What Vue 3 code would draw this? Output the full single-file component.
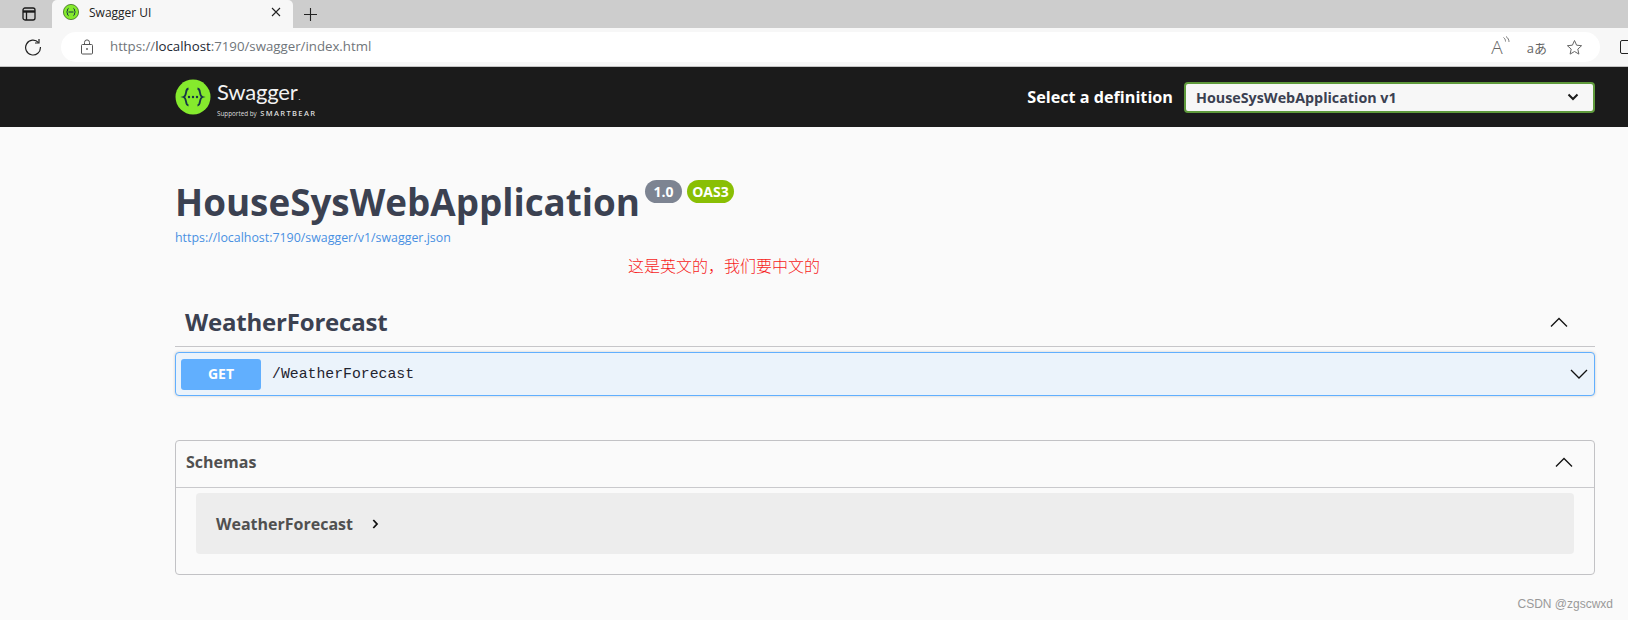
<script setup>
const path = '/WeatherForecast'
</script>

<template>
  <div class="page">
    <div class="tabstrip">
      <div class="winbtn">
        <svg width="16" height="16" viewBox="0 0 16 16" fill="none" stroke="#1a1a1a" stroke-width="1.3"><rect x="2" y="2" width="12" height="12" rx="2"/><path d="M2 5.500h12" stroke-width="2.400"/><path d="M5.500 6v8"/></svg>
      </div>
      <div class="tab">
        <svg class="fav" width="16" height="16" viewBox="0 0 16 16"><circle cx="8" cy="8" r="7.600" fill="#85ea2d" stroke="#2d5a10" stroke-width=".7"/><path d="M5.600 4.300C4 4.500 5 7.400 3.600 8 5 8.600 4 11.500 5.600 11.700M10.400 4.300C12 4.500 11 7.400 12.400 8 11 8.600 12 11.500 10.400 11.700M5.500 8h5" fill="none" stroke="#173647" stroke-width="1"/></svg>
        <span class="tabtitle">Swagger UI</span>
        <svg class="close" width="10" height="10" viewBox="0 0 10 10" stroke="#222" stroke-width="1.100"><path d="M1 1l8 8M9 1l-8 8"/></svg>
      </div>
      <svg class="plus" width="15" height="15" viewBox="0 0 15 15" stroke="#222" stroke-width="1.100"><path d="M7.500 1v13M1 7.500h13"/></svg>
    </div>

    <div class="addressbar">
      <svg class="reload" width="18" height="18" viewBox="0 0 18 18" fill="none" stroke="#222" stroke-width="1.200"><path d="M14.500 4.600A7.400 7.400 0 1 0 16.400 9"/><path d="M15 1v4h-4"/></svg>
      <div class="omnibox">
        <svg class="lock" width="14" height="16" viewBox="0 0 14 16" fill="none" stroke="#555" stroke-width="1"><rect x="1.500" y="5.500" width="11" height="9.500" rx="1"/><path d="M4.500 5.500V3.400a2.500 2.500 0 0 1 5 0v2.100"/><circle cx="7" cy="10" r=".9" fill="#555" stroke="none"/></svg>
        <span class="url">https://<b>localhost</b>:7190/swagger/index.html</span>
        <span class="grow"></span>
        <span class="read">A<svg width="7" height="11" viewBox="0 0 7 11" fill="none" stroke="#666" stroke-width=".9"><path d="M.5 1.500c1.500 1 2 2.500 2 4M3 .5c2 1.400 3 3.400 3 5.400"/></svg></span>
        <span class="trans">aあ</span>
        <svg class="star" width="17" height="17" viewBox="0 0 17 17" fill="none" stroke="#666" stroke-width="1"><path d="M8.500 1.500l2.100 4.700 5 .5-3.800 3.400 1.100 5-4.400-2.600-4.400 2.600 1.100-5L1.400 6.700l5-.5z"/></svg>
      </div>
      <span class="edge"></span>
    </div>

    <header class="topbar">
      <div class="brand">
        <svg width="36" height="36" viewBox="0 0 36 36"><circle cx="18" cy="18" r="17.500" fill="#85ea2d"/><path d="M13.500 9.500C9.500 10 12.500 16.800 8.500 18c4 1.200 1 8 5 8.500M22.500 9.500c4 .5 1 7.300 5 8.500-4 1.200-1 8-5 8.500" fill="none" stroke="#173647" stroke-width="1.800"/><circle cx="14" cy="18" r="1.200" fill="#173647"/><circle cx="18" cy="18" r="1.200" fill="#173647"/><circle cx="22" cy="18" r="1.200" fill="#173647"/></svg>
        <div class="brandtext">
          <div class="wordmark">Swagger<small>.</small></div>
          <div class="support">Supported by <b>SMARTBEAR</b></div>
        </div>
      </div>
      <div class="definition">
        <span class="deflabel">Select a definition</span>
        <div class="select">
          <span>HouseSysWebApplication v1</span>
          <svg width="12" height="8" viewBox="0 0 12 8" fill="none" stroke="#1b1b1b" stroke-width="2"><path d="M1.500 1.500L6 6l4.500-4.500"/></svg>
        </div>
      </div>
    </header>

    <main class="content">
      <div class="info">
        <div class="titlerow">
          <h1>HouseSysWebApplication</h1>
          <span class="badge ver">1.0</span>
          <span class="badge oas">OAS3</span>
        </div>
        <a class="speclink">https://localhost:7190/swagger/v1/swagger.json</a>
      </div>
      <p class="note">这是英文的，我们要中文的</p>

      <section class="tagsec">
        <h2>WeatherForecast</h2>
        <svg class="chev" width="20" height="20" viewBox="0 0 20 20" fill="none" stroke="#111" stroke-width="1.300"><path d="M2 14.500l8-8 8 8"/></svg>
      </section>

      <div class="opblock">
        <span class="method">GET</span>
        <span class="path">{{ path }}</span>
        <svg class="chev" width="20" height="20" viewBox="0 0 20 20" fill="none" stroke="#111" stroke-width="1.300"><path d="M2 6l8 8 8-8"/></svg>
      </div>

      <section class="schemas">
        <div class="schemahead">
          <span>Schemas</span>
          <svg class="chev" width="20" height="20" viewBox="0 0 20 20" fill="none" stroke="#111" stroke-width="1.300"><path d="M2 14.500l8-8 8 8"/></svg>
        </div>
        <div class="model">
          <span>WeatherForecast</span>
          <svg width="7" height="10" viewBox="0 0 7 10" fill="none" stroke="#111" stroke-width="1.800"><path d="M1.300 1L5 5 1.300 9"/></svg>
        </div>
      </section>
    </main>

    <span class="watermark">CSDN @zgscwxd</span>
  </div>
</template>

<style>
html, body { margin: 0; background: #fafafa; overflow: hidden; }
</style>

<style scoped>
.page {
  position: relative;
  width: 1628px;
  height: 620px;
  overflow: hidden;
  background: #fafafa;
  font-family: "Open Sans", "Noto Sans CJK SC", sans-serif;
  color: #3b4151;
}
.tabstrip {
  height: 28px;
  background: #cdcdcd;
  display: flex;
  align-items: flex-end;
  box-sizing: border-box;
}
.winbtn {
  width: 52px;
  height: 28px;
  display: flex;
  align-items: center;
  justify-content: center;
  padding-left: 6px;
  box-sizing: border-box;
}
.tab {
  width: 241px;
  height: 28px;
  background: #f7f7f7;
  border-radius: 5px 5px 0 0;
  display: flex;
  align-items: center;
  padding: 0 12px 4px 11px;
  box-sizing: border-box;
}
.fav { flex: none; }
.tabtitle { margin-left: 10px; font-size: 12px; color: #222; flex: 1; }
.plus { margin: 0 0 6px 10px; }
.addressbar {
  height: 38px;
  background: #f7f7f7;
  border-bottom: 1px solid #c4c4c4;
  display: flex;
  align-items: center;
  box-sizing: content-box;
}
.reload { margin-left: 24px; flex: none; }
.omnibox {
  margin-left: 19px;
  width: 1539px;
  height: 30px;
  border-radius: 15px;
  background: #fff;
  display: flex;
  align-items: center;
  flex: none;
}
.lock { margin-left: 19px; flex: none; }
.url { margin-left: 16px; font-size: 13.250px; color: #70757a; position: relative; top: -1px; }
.url b { font-weight: 400; color: #1c2733; }
.grow { flex: 1; }
.read { font-size: 19px; color: #666; display: flex; font-weight: 300; line-height: 22px; margin-right: 1px; }
.trans { margin-left: 16px; font-size: 13px; color: #666; }
.star { margin: 0 17px 0 19px; }
.edge {
  margin-left: 20px;
  width: 10px;
  height: 12px;
  border: 1px solid #222;
  border-radius: 2px;
  flex: none;
}
.topbar {
  height: 60px;
  background: #1b1b1b;
  display: flex;
  align-items: center;
  justify-content: space-between;
  padding: 0 33px 0 175px;
}
.brand { display: flex; align-items: center; gap: 6px; }
.brandtext { color: #fff; }
.wordmark { font-family: "Lato", sans-serif; font-weight: 400; font-size: 22px; line-height: 24px; margin: 5px 0 -1px; letter-spacing: -.2px; color: #f2f2f2; }
.wordmark small { font-size: 8px; margin-left: 1px; }
.support { font-size: 6.300px; line-height: 10px; color: #ddd; white-space: nowrap; }
.support b { font-size: 7.500px; letter-spacing: 1.350px; margin-left: 2px; font-weight: 600; }
.definition { display: flex; align-items: center; gap: 11px; }
.deflabel { color: #fff; font-size: 16.200px; font-weight: 700; }
.select {
  width: 411px;
  height: 31px;
  box-sizing: border-box;
  border: 2px solid #5f9a3c;
  border-radius: 4px;
  background: #f7f7f7;
  display: flex;
  align-items: center;
  justify-content: space-between;
  padding: 0 14px 0 10px;
  color: #3b4151;
  font-size: 14.300px;
  font-weight: 700;
}
.content { padding: 0 33px 0 175px; }
.info { padding-top: 53px; }
.titlerow { display: flex; align-items: flex-start; }
h1 {
  margin: 0;
  font-size: 36.800px;
  line-height: 44px;
  font-weight: 700;
  letter-spacing: 0;
}
.badge {
  margin-top: 0;
  height: 23px;
  border-radius: 12px;
  color: #fff;
  font-size: 14px;
  font-weight: 700;
  display: flex;
  align-items: center;
  justify-content: center;
}
.ver { margin-left: 5px; width: 37px; background: #7d8492; }
.oas { margin-left: 5px; width: 47px; background: #89bf04; }
.speclink {
  display: block;
  margin-top: 6px;
  font-size: 12.400px;
  line-height: 16px;
  color: #4990e2;
}
.note {
  margin: 9px 0 0 453px;
  font-size: 16px;
  line-height: 22px;
  color: #f61c1c;
  font-weight: 300;
}
.tagsec {
  margin-top: 24px;
  box-sizing: content-box;
  border-bottom: 1px solid #c6c6c9;
  display: flex;
  align-items: center;
  justify-content: space-between;
  padding: 0 26px 3px 10px;
  height: 42px;
}
h2 { margin: 0; font-size: 24px; line-height: 32px; font-weight: 700; letter-spacing: -.2px; }
.opblock {
  margin-top: 5px;
  height: 44px;
  box-sizing: border-box;
  border: 1px solid #61affe;
  border-radius: 4px;
  background: #ebf3fb;
  box-shadow: 0 0 3px rgba(0,0,0,.19);
  display: flex;
  align-items: center;
  padding: 0 5px 0 5px;
}
.method {
  width: 80px;
  height: 31px;
  box-sizing: border-box;
  padding-bottom: 2px;
  border-radius: 3px;
  background: #61affe;
  color: #fff;
  font-size: 14px;
  font-weight: 700;
  display: flex;
  align-items: center;
  justify-content: center;
  flex: none;
}
.path {
  margin-left: 11px;
  font-family: "Liberation Mono", monospace;
  font-size: 14.800px;
  font-weight: 400;
  color: #1f2430;
  flex: 1;
}
.schemas {
  margin-top: 44px;
  height: 135px;
  box-sizing: border-box;
  border: 1px solid #c2c2c5;
  border-radius: 4px;
}
.schemahead {
  height: 47px;
  box-sizing: border-box;
  border-bottom: 1px solid #c9c9cc;
  display: flex;
  align-items: center;
  justify-content: space-between;
  padding: 0 20px 4px 10px;
  font-size: 16px;
  font-weight: 700;
  color: #505050;
}
.model {
  margin: 5px 20px 0;
  height: 61px;
  border-radius: 4px;
  background: #ededed;
  display: flex;
  align-items: center;
  gap: 19px;
  padding-left: 20px;
  font-size: 16px;
  font-weight: 700;
  color: #505050;
}
.watermark {
  position: absolute;
  right: 15px;
  top: 596px;
  font-size: 12px;
  line-height: 16px;
  color: #999;
  font-family: "Liberation Sans", sans-serif;
}
</style>
